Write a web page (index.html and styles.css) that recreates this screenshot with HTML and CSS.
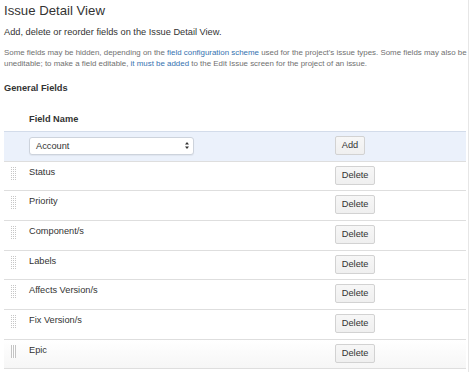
FILE: index.html
```html
<!DOCTYPE html>
<html>
<head>
<meta charset="utf-8">
<title>Issue Detail View</title>
<link rel="stylesheet" href="styles.css">
</head>
<body>
<div class="page">
  <h1 class="title">Issue Detail View</h1>
  <p class="lead">Add, delete or reorder fields on the Issue Detail View.</p>
  <p class="note">Some fields may be hidden, depending on the <a href="#">field configuration scheme</a> used for the project's issue types. Some fields may also be<br>uneditable; to make a field editable, <a href="#">it must be added</a> to the Edit Issue screen for the project of an issue.</p>
  <h3 class="section">General Fields</h3>
  <div class="fields">
    <div class="row head">
      <div class="c-handle"></div>
      <div class="c-name">Field Name</div>
      <div class="c-op"></div>
    </div>
    <div class="row add">
      <div class="c-handle"></div>
      <div class="c-name">
        <div class="select">
          <span>Account</span>
          <svg class="arrows" width="4" height="7" viewBox="0 0 4 7"><path d="M2 0 L4 2.6 L0 2.6 Z M0 4.4 L4 4.4 L2 7 Z" fill="#333"/></svg>
        </div>
      </div>
      <div class="c-op"><button class="btn">Add</button></div>
    </div>
    <div class="row">
      <div class="c-handle"><span class="grip"></span></div>
      <div class="c-name">Status</div>
      <div class="c-op"><button class="btn">Delete</button></div>
    </div>
    <div class="row">
      <div class="c-handle"><span class="grip"></span></div>
      <div class="c-name">Priority</div>
      <div class="c-op"><button class="btn">Delete</button></div>
    </div>
    <div class="row">
      <div class="c-handle"><span class="grip"></span></div>
      <div class="c-name">Component/s</div>
      <div class="c-op"><button class="btn">Delete</button></div>
    </div>
    <div class="row">
      <div class="c-handle"><span class="grip"></span></div>
      <div class="c-name">Labels</div>
      <div class="c-op"><button class="btn">Delete</button></div>
    </div>
    <div class="row">
      <div class="c-handle"><span class="grip"></span></div>
      <div class="c-name">Affects Version/s</div>
      <div class="c-op"><button class="btn">Delete</button></div>
    </div>
    <div class="row">
      <div class="c-handle"><span class="grip"></span></div>
      <div class="c-name">Fix Version/s</div>
      <div class="c-op"><button class="btn">Delete</button></div>
    </div>
    <div class="row hover last">
      <div class="c-handle"><span class="grip"></span></div>
      <div class="c-name">Epic</div>
      <div class="c-op"><button class="btn">Delete</button></div>
    </div>
  </div>
</div>
</body>
</html>
```

FILE: styles.css
```css
html, body {
  margin: 0;
  padding: 0;
  background: #fff;
}
body {
  font-family: "Liberation Sans", Arial, sans-serif;
  color: #333;
}
.page {
  width: 469px;
  min-height: 372px;
  box-sizing: border-box;
  padding: 2px 2px 0 4px;
  border-right: 1px solid #e6e6e6;
}
.title {
  margin: 0;
  font-size: 13.2px;
  line-height: 17px;
  font-weight: normal;
  color: #333;
}
.lead {
  margin: 7.3px 0 0;
  font-size: 9.24px;
  line-height: 13px;
}
.note {
  margin: 7.4px 0 0;
  font-size: 7.92px;
  line-height: 11px;
  color: #707070;
  white-space: nowrap;
}
.note a {
  color: #3572b0;
  text-decoration: none;
}
.section {
  margin: 13.3px 0 0;
  font-size: 9.24px;
  line-height: 13px;
  font-weight: bold;
}
.fields {
  margin-top: 10px;
  font-size: 9.24px;
  line-height: 13px;
}
.row {
  display: grid;
  grid-template-columns: 25px 306px 1fr;
  height: 29.7px;
  box-sizing: border-box;
  border-top: 1px solid #dedede;
  padding-top: 4px;
}
.row.head {
  height: 26px;
  border-top: 0;
  padding-top: 8px;
  font-weight: bold;
}
.row.add {
  background: #ebf1fb;
  border-top-color: #d3dcea;
  padding-top: 4px;
}
.row.add .c-name {
  padding-top: 0.7px;
}
.row.hover {
  background: linear-gradient(#ffffff, #f6f6f6);
}
.row.last {
  border-bottom: 1px solid #dedede;
  height: 30.7px;
}
.c-handle {
  padding-left: 7px;
}
.grip {
  display: block;
  width: 5px;
  height: 13px;
  margin-top: 1px;
  background-image:
    linear-gradient(90deg, transparent 1px, #fff 1px),
    linear-gradient(#c6c6c6 1px, transparent 1px);
  background-size: 2px 2px, 2px 2px;
}
.row.hover .grip {
  background-image: linear-gradient(90deg, #c4c4c4 1px, #fff 1px);
  background-size: 2px 2px;
}
.select {
  width: 165px;
  height: 18.3px;
  box-sizing: border-box;
  border: 1px solid #cdd3dc;
  border-radius: 3px;
  background: #fff;
  display: flex;
  align-items: center;
  justify-content: space-between;
  padding: 0 4px 0 6px;
  box-shadow: 0 1px 1px rgba(0,0,0,0.05);
}
.select span {
  line-height: 13px;
  padding-top: 1px;
}
.arrows {
  display: block;
}
.btn {
  font-family: "Liberation Sans", Arial, sans-serif;
  font-size: 9.24px;
  line-height: 13px;
  color: #333;
  background: linear-gradient(#f7f7f7, #efefef);
  border: 1px solid #d2d2d2;
  border-radius: 2px;
  padding: 2px 5.8px 2px;
  margin: 0;
  display: block;
}
```
